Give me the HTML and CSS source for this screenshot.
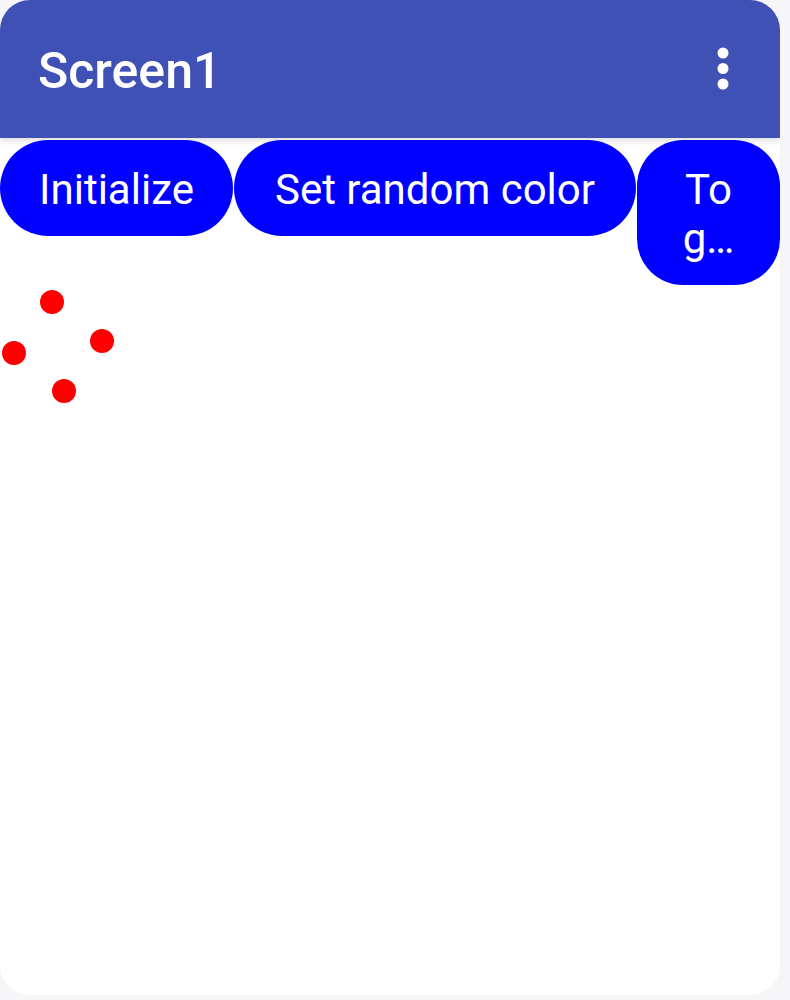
FILE: index.html
```html
<!DOCTYPE html>
<html lang="en">
<head>
    <meta charset="UTF-8">
    <meta name="viewport" content="width=device-width, initial-scale=1.0">
    <title>Screen1</title>
    <link rel="stylesheet" href="styles.css">
</head>
<body>
    <div class="screen">
        <div class="title-bar">
            <h1>Screen1</h1>
            <svg class="menu-icon" width="12" height="44" viewBox="0 0 12 44">
                <circle cx="6" cy="6" r="5.5" fill="#fff"/>
                <circle cx="6" cy="21.5" r="5.5" fill="#fff"/>
                <circle cx="6" cy="37" r="5.5" fill="#fff"/>
            </svg>
        </div>
        <div class="button-row">
            <button class="btn btn-init">Initialize</button>
            <button class="btn btn-color">Set random color</button>
            <button class="btn btn-last">To g…</button>
        </div>
        <div class="canvas">
            <div class="ball" style="left: 40px; top: 5px;"></div>
            <div class="ball" style="left: 2px; top: 56px;"></div>
            <div class="ball" style="left: 90px; top: 44px;"></div>
            <div class="ball" style="left: 52px; top: 94px;"></div>
        </div>
    </div>
</body>
</html>
```

FILE: styles.css
```css
body {
    margin: 0;
    background-color: #f6f6f8;
    font-family: Roboto, "Noto Sans", sans-serif;
}
.screen {
    width: 780px;
    height: 995px;
    background: #fff;
    border-radius: 30px;
    overflow: hidden;
    position: relative;
}
.title-bar {
    height: 138px;
    background-color: #3f51b5;
    display: flex;
    align-items: center;
    justify-content: space-between;
    padding: 0 51px 0 38px;
    box-shadow: 0 3px 6px rgba(0, 0, 0, 0.12);
    position: relative;
}
.title-bar h1 {
    margin: 0;
    color: #fff;
    font-size: 50px;
    font-weight: 500;
    position: relative;
    top: 2px;
}
.menu-icon {
    display: block;
}
.button-row {
    display: flex;
    align-items: flex-start;
    gap: 1px;
    margin-top: 2px;
    position: relative;
}
.btn {
    background-color: #0000ff;
    color: #fff;
    border: none;
    border-radius: 48px;
    font-family: Roboto, "Noto Sans", sans-serif;
    font-size: 42px;
    line-height: 49px;
    padding: 25px 0 22px;
    white-space: nowrap;
}
.btn-init {
    width: 233px;
}
.btn-color {
    width: 402px;
}
.btn-last {
    width: 143px;
    padding: 25px 38px 22px;
    white-space: normal;
    border-radius: 46px;
}
.canvas {
    position: relative;
    height: 500px;
}
.ball {
    position: absolute;
    width: 24px;
    height: 24px;
    border-radius: 50%;
    background-color: #f00;
}
```
